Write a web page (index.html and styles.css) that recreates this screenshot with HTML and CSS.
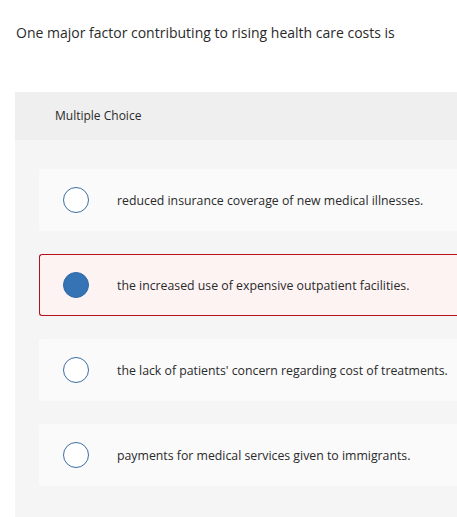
FILE: index.html
```html
<!DOCTYPE html>
<html>
<head>
<meta charset="utf-8">
<link rel="stylesheet" href="styles.css">
</head>
<body>
<p class="question">One major factor contributing to rising health care costs is</p>
<section class="panel">
  <div class="panel-header">Multiple Choice</div>
  <div class="options">
    <div class="option"><span class="radio"></span><span class="label">reduced insurance coverage of new medical illnesses.</span></div>
    <div class="option selected"><span class="radio"></span><span class="label">the increased use of expensive outpatient facilities.</span></div>
    <div class="option"><span class="radio"></span><span class="label">the lack of patients' concern regarding cost of treatments.</span></div>
    <div class="option"><span class="radio"></span><span class="label">payments for medical services given to immigrants.</span></div>
  </div>
</section>
</body>
</html>
```
FILE: styles.css
```css
html, body {
  margin: 0;
  padding: 0;
  overflow: hidden;
  background: #fff;
}
body {
  font-family: "Open Sans", Lato, sans-serif;
  color: #2a2a2a;
}
.question {
  margin: 0;
  padding: 24px 16px 0;
  font-size: 14px;
  line-height: 18px;
  height: 68px;
  white-space: nowrap;
}
.panel {
  margin-left: 15px;
  background: #f5f5f5;
  padding-bottom: 40px;
}
.panel-header {
  height: 48px;
  line-height: 48px;
  background: #efefef;
  padding-left: 40px;
  font-size: 12px;
}
.options {
  padding: 29px 0 0 24px;
  display: flex;
  flex-direction: column;
  gap: 23px;
}
.option {
  box-sizing: border-box;
  height: 62px;
  background: #fafafa;
  border-radius: 3px 0 0 3px;
  display: flex;
  align-items: center;
  padding-left: 24px;
  font-size: 12.3px;
  white-space: nowrap;
  overflow: hidden;
}
.option.selected {
  background: #fdf3f3;
  border: 1px solid #b5121b;
  border-right: none;
  padding-left: 23px;
}
.radio {
  box-sizing: border-box;
  width: 26px;
  height: 26px;
  border-radius: 50%;
  border: 1.5px solid #3b6ea5;
  background: #fff;
  flex: none;
}
.selected .radio {
  background: #3673b4;
  border-color: #2f68a6;
}
.label {
  margin-left: 28px;
}
```
